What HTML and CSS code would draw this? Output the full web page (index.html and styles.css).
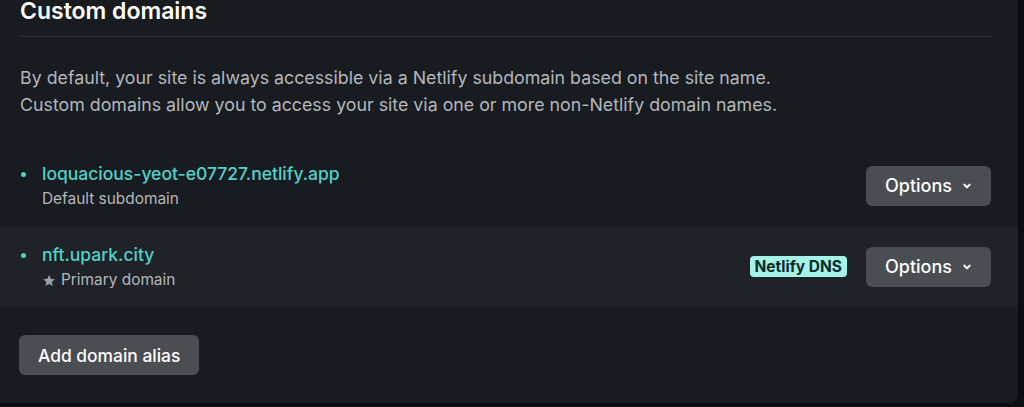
FILE: index.html
```html
<!DOCTYPE html>
<html lang="en">
<head>
    <meta charset="UTF-8">
    <title>Custom domains</title>
    <link rel="stylesheet" href="styles.css">
</head>
<body>
    <div class="card">
        <div class="card-head">
            <h2>Custom domains</h2>
        </div>
        <p class="intro">By default, your site is always accessible via a Netlify subdomain based on the site name.<br>
        Custom domains allow you to access your site via one or more non-Netlify domain names.</p>
        <ul class="domains">
            <li class="domain">
                <div class="domain-info">
                    <span class="domain-name">loquacious-yeot-e07727.netlify.app</span>
                    <span class="domain-note">Default subdomain</span>
                </div>
                <div class="domain-actions">
                    <button class="btn">Options <svg class="caret" width="10" height="10" viewBox="0 0 10 10"><path d="M2.3 3.6 5 6.3 7.7 3.6" fill="none" stroke="currentColor" stroke-width="2" stroke-linecap="round" stroke-linejoin="round"/></svg></button>
                </div>
            </li>
            <li class="domain primary">
                <div class="domain-info">
                    <span class="domain-name">nft.upark.city</span>
                    <span class="domain-note"><svg class="star" width="12" height="11" viewBox="1.4 1.5 21 19.4"><path d="M12 1.5l3.1 6.6 7.2.8-5.4 4.9 1.6 7.1L12 17.3l-6.5 3.6 1.6-7.1-5.4-4.9 7.2-.8z" fill="currentColor"/></svg>Primary domain</span>
                </div>
                <div class="domain-actions">
                    <span class="badge">Netlify DNS</span>
                    <button class="btn">Options <svg class="caret" width="10" height="10" viewBox="0 0 10 10"><path d="M2.3 3.6 5 6.3 7.7 3.6" fill="none" stroke="currentColor" stroke-width="2" stroke-linecap="round" stroke-linejoin="round"/></svg></button>
                </div>
            </li>
        </ul>
        <div class="card-foot">
            <button class="btn btn-add">Add domain alias</button>
        </div>
    </div>
</body>
</html>
```

FILE: styles.css
```css
body {
    margin: 0;
    padding: 0;
    background-color: #0c0d10;
    font-family: Inter, "Liberation Sans", sans-serif;
    overflow: hidden;
}
.card {
    display: flow-root;
    width: 1018px;
    height: 403px;
    background-color: #181b20;
    border-bottom-right-radius: 8px;
    box-sizing: border-box;
}
.card-head {
    margin: 0 26px 0 20px;
    padding-bottom: 8px;
    border-bottom: 1px solid #2e3137;
}
.card-head h2 {
    margin: -6px 0 0;
    font-size: 23px;
    line-height: 34px;
    font-weight: 600;
    color: #ffffff;
}
.intro {
    margin: 27px 20px 0;
    font-size: 17.8px;
    line-height: 27px;
    color: #b4b7bc;
}
.domains {
    list-style: none;
    margin: 27px 0 0;
    padding: 0;
}
.domain {
    display: flex;
    align-items: center;
    justify-content: space-between;
    height: 81px;
    padding: 0 27px 0 20px;
}
.domain.primary {
    background-color: #1f2227;
}
.domain-info {
    display: flex;
    flex-direction: column;
    gap: 4px;
    padding-left: 22px;
    position: relative;
}
.domain-info::before {
    content: "";
    position: absolute;
    left: 1px;
    top: 10px;
    width: 5px;
    height: 5px;
    border-radius: 50%;
    background-color: #4ed3c5;
}
.domain-name {
    font-size: 17.5px;
    line-height: 23px;
    font-weight: 500;
    color: #4fd3c8;
}
.domain-note {
    display: flex;
    align-items: center;
    gap: 6px;
    font-size: 15.4px;
    line-height: 20px;
    color: #b4b7bc;
}
.star {
    margin-left: 1px;
    color: #9a9da3;
}
.domain-actions {
    display: flex;
    align-items: center;
    gap: 19px;
}
.badge {
    padding: 2px 5px;
    border-radius: 4px;
    background-color: #a4f3e6;
    color: #0d2a2c;
    font-size: 15.5px;
    line-height: 17px;
    font-weight: 700;
}
.btn {
    display: inline-flex;
    align-items: center;
    gap: 10px;
    height: 40px;
    padding: 0 19px;
    border: none;
    border-radius: 6px;
    background-color: #4a4d52;
    color: #ffffff;
    font-family: inherit;
    font-size: 18px;
    font-weight: 500;
    cursor: pointer;
}
.btn-add {
    font-size: 17.4px;
}
.card-foot {
    padding: 28px 20px 0 19px;
}
```
